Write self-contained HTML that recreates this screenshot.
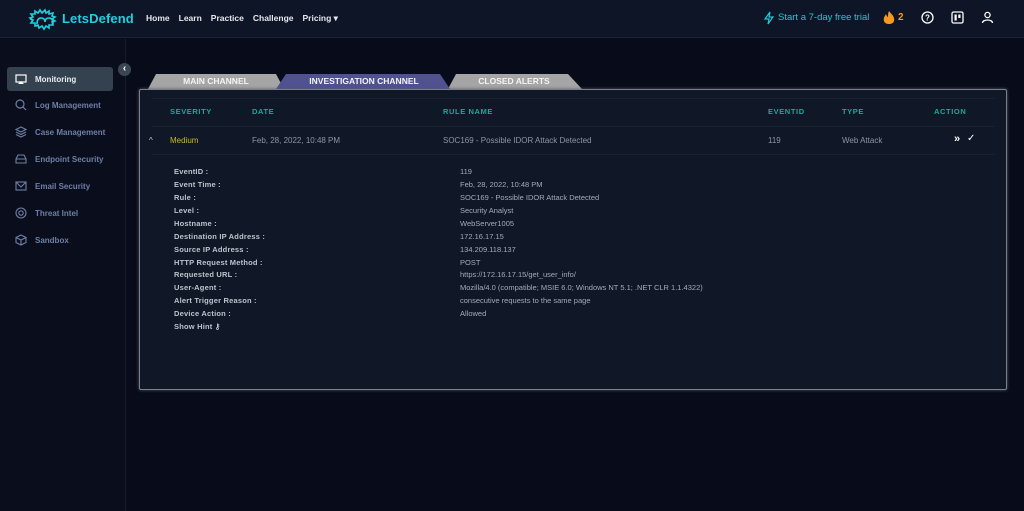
<!DOCTYPE html>
<html><head><meta charset="utf-8"><style>
*{box-sizing:border-box;margin:0;padding:0}
body{width:1024px;height:511px;overflow:hidden;background:#080b19;font-family:"Liberation Sans",sans-serif;position:relative}
.hdr{position:absolute;left:0;top:0;width:1024px;height:38px;background:#0e1526;border-bottom:1px solid #1c2334}
.logo{position:absolute;left:28px;top:6px}
.brand{position:absolute;left:62px;top:11px;color:#1fd0e0;font-size:13px;font-weight:bold;letter-spacing:0.1px}
.nav{position:absolute;top:13px;left:146px;color:#e6e8ee;font-size:8.5px;font-weight:bold}
.nav span{margin-right:9px}
.trial{position:absolute;left:764px;top:12px;color:#1fc8d6;font-size:9.5px}
.side{position:absolute;left:0;top:39px;width:126px;height:472px;background:#0a0e1c;border-right:1px solid #161c2b}
.item{position:absolute;left:7px;width:106px;height:24px;color:#6e7fa6;font-size:8px;font-weight:bold;display:flex;align-items:center;padding-left:8px}
.item svg{margin-right:8px}
.item.act{background:#34414f;color:#e8ecf2;border-radius:3px}
.col{position:absolute;left:118px;top:63px;width:13px;height:13px;border-radius:50%;background:#3a4654;color:#fff;font-size:10px;text-align:center;line-height:12px;font-weight:bold}
.tab{position:absolute;top:73px;height:16px;font-size:8.5px;font-weight:bold;color:#f4f4f6;text-align:center;line-height:17px}
.panel{position:absolute;left:139px;top:89px;width:868px;height:301px;background:#101827;border:1.5px solid #7b7f8c;border-radius:2px;box-shadow:0 0 3px #5a5e6a}
.th{position:absolute;top:107px;color:#1aa79a;font-size:7.5px;font-weight:bold;letter-spacing:0.6px}
.td{position:absolute;top:136px;color:#8e96a6;font-size:8px}
.lbl{position:absolute;left:174px;color:#bcc3ce;font-size:7.5px;font-weight:bold;letter-spacing:0.2px}
.val{position:absolute;left:460px;color:#a4abb7;font-size:7.5px}
.line{position:absolute;left:152px;width:842px;height:1px;background:#1a2232}
</style></head><body>
<div class="hdr">
<svg class="logo" width="34" height="26" viewBox="0 0 34 26"><path d="M5 14 l-3-2 3-1 -2-3 4 0 0-3 3 2 2-3 2 3 3-3 1 3 3-2 0 3 4-1-1 3 3 1-3 2 3 2-3 1 1 3-4 0 0 3-3-2-2 3-2-3-3 2-1-3-3 1 0-3-4 0 2-3-3-1z" fill="none" stroke="#1fd0e0" stroke-width="1.6"/><path d="M9 18 q0-6 4-6 q4 0 4 4 q0-4 4-4 q4 0 4 6" fill="none" stroke="#1fd0e0" stroke-width="1.6"/></svg>
<div class="brand">LetsDefend</div>
<div class="nav"><span>Home</span><span>Learn</span><span>Practice</span><span>Challenge</span><span>Pricing ▾</span></div>
<svg style="position:absolute;left:763px;top:11px" width="12" height="14" viewBox="0 0 12 14"><path d="M7 1 L2 8 H6 L5 13 L10 6 H6 Z" fill="none" stroke="#1fc8d6" stroke-width="1.2"/></svg>
<div class="trial" style="left:778px">Start a 7-day free trial</div>
<svg style="position:absolute;left:882px;top:10px" width="14" height="16" viewBox="0 0 14 16"><path d="M7 1 C9 4 13 6 12 11 C11 15 3 15 2 11 C1 8 3 6 4 4 C5 7 6 7 6 7 C6 5 6 3 7 1Z" fill="#f59a1e"/></svg>
<div style="position:absolute;left:898px;top:12px;color:#f59a1e;font-size:10px;font-weight:bold">2</div>
<svg style="position:absolute;left:921px;top:11px" width="13" height="13" viewBox="0 0 13 13"><circle cx="6.5" cy="6.5" r="5.5" fill="none" stroke="#fff" stroke-width="1.3"/><text x="6.5" y="9.5" font-size="8" fill="#fff" text-anchor="middle" font-family="Liberation Sans" font-weight="bold">?</text></svg>
<svg style="position:absolute;left:951px;top:11px" width="13" height="13" viewBox="0 0 13 13"><rect x="1" y="1" width="11" height="11" rx="1.5" fill="none" stroke="#fff" stroke-width="1.3"/><rect x="3.5" y="3.5" width="2.2" height="6" fill="#fff"/><rect x="7.3" y="3.5" width="2.2" height="3.5" fill="#fff"/></svg>
<svg style="position:absolute;left:981px;top:11px" width="13" height="13" viewBox="0 0 13 13"><circle cx="6.5" cy="4" r="2.6" fill="none" stroke="#fff" stroke-width="1.3"/><path d="M1.5 12 C1.5 8 11.5 8 11.5 12" fill="none" stroke="#fff" stroke-width="1.3"/></svg>
</div>
<div class="side"></div>
<div class="item act" style="top:67px"><svg width="12" height="11" viewBox="0 0 12 11"><rect x="1" y="1" width="10" height="7" fill="none" stroke="#fff" stroke-width="1.2"/><path d="M3 10 L6 7 L9 10Z" fill="#fff"/></svg>Monitoring</div>
<div class="item" style="top:93px"><svg width="12" height="12" viewBox="0 0 12 12"><circle cx="5" cy="5" r="4" fill="none" stroke="#6e7fa6" stroke-width="1.2"/><path d="M8 8 L11 11" stroke="#6e7fa6" stroke-width="1.2"/></svg>Log Management</div>
<div class="item" style="top:120px"><svg width="12" height="12" viewBox="0 0 12 12"><path d="M6 1 L11 3.5 L6 6 L1 3.5Z M1 6 L6 8.5 L11 6 M1 8.5 L6 11 L11 8.5" fill="none" stroke="#6e7fa6" stroke-width="1.1"/></svg>Case Management</div>
<div class="item" style="top:147px"><svg width="12" height="12" viewBox="0 0 12 12"><path d="M1 6 L3 2 H9 L11 6 V10 H1Z M1 6 H11" fill="none" stroke="#6e7fa6" stroke-width="1.1"/></svg>Endpoint Security</div>
<div class="item" style="top:174px"><svg width="12" height="12" viewBox="0 0 12 12"><rect x="1" y="2" width="10" height="8" fill="none" stroke="#6e7fa6" stroke-width="1.1"/><path d="M1 2 L6 7 L11 2" fill="none" stroke="#6e7fa6" stroke-width="1.1"/></svg>Email Security</div>
<div class="item" style="top:201px"><svg width="12" height="12" viewBox="0 0 12 12"><circle cx="6" cy="6" r="5" fill="none" stroke="#6e7fa6" stroke-width="1.1"/><circle cx="6" cy="6" r="2.2" fill="none" stroke="#6e7fa6" stroke-width="1.1"/></svg>Threat Intel</div>
<div class="item" style="top:228px"><svg width="12" height="12" viewBox="0 0 12 12"><path d="M6 1 L11 3.5 V8.5 L6 11 L1 8.5 V3.5Z M1 3.5 L6 6 L11 3.5 M6 6 V11" fill="none" stroke="#6e7fa6" stroke-width="1.1"/></svg>Sandbox</div>
<div class="col">‹</div>
<svg style="position:absolute;left:148px;top:73px" width="440" height="17" viewBox="0 0 440 17"><path d="M0 16 L8 1 H128 L136 16Z" fill="#a5a5a5"/><path d="M300 16 L308 1 H420 L434 16Z" fill="#a5a5a5"/><path d="M128 16 L138 1 H292 L302 16Z" fill="#4f5190"/></svg>
<div class="tab" style="left:156px;width:120px">MAIN CHANNEL</div>
<div class="tab" style="left:286px;width:156px">INVESTIGATION CHANNEL</div>
<div class="tab" style="left:452px;width:124px">CLOSED ALERTS</div>
<div class="panel"></div>
<div class="line" style="top:98px"></div>
<div class="line" style="top:126px"></div>
<div class="line" style="top:154px"></div>
<div class="th" style="left:170px">SEVERITY</div>
<div class="th" style="left:252px">DATE</div>
<div class="th" style="left:443px">RULE NAME</div>
<div class="th" style="left:768px">EVENTID</div>
<div class="th" style="left:842px">TYPE</div>
<div class="th" style="left:934px">ACTION</div>
<div class="td" style="left:149px;color:#ccc">^</div>
<div class="td" style="left:170px;color:#c8b82a">Medium</div>
<div class="td" style="left:252px">Feb, 28, 2022, 10:48 PM</div>
<div class="td" style="left:443px">SOC169 - Possible IDOR Attack Detected</div>
<div class="td" style="left:768px">119</div>
<div class="td" style="left:842px">Web Attack</div>
<div class="td" style="left:954px;top:133px;color:#fff;font-size:11px;font-weight:bold">»</div>
<div class="td" style="left:967px;top:133px;color:#fff;font-size:10px">✓</div>
<div class="lbl" style="top:167px">EventID :</div><div class="val" style="top:167px">119</div>
<div class="lbl" style="top:180px">Event Time :</div><div class="val" style="top:180px">Feb, 28, 2022, 10:48 PM</div>
<div class="lbl" style="top:193px">Rule :</div><div class="val" style="top:193px">SOC169 - Possible IDOR Attack Detected</div>
<div class="lbl" style="top:206px">Level :</div><div class="val" style="top:206px">Security Analyst</div>
<div class="lbl" style="top:219px">Hostname :</div><div class="val" style="top:219px">WebServer1005</div>
<div class="lbl" style="top:232px">Destination IP Address :</div><div class="val" style="top:232px">172.16.17.15</div>
<div class="lbl" style="top:245px">Source IP Address :</div><div class="val" style="top:245px">134.209.118.137</div>
<div class="lbl" style="top:258px">HTTP Request Method :</div><div class="val" style="top:258px">POST</div>
<div class="lbl" style="top:270px">Requested URL :</div><div class="val" style="top:270px">https://172.16.17.15/get_user_info/</div>
<div class="lbl" style="top:283px">User-Agent :</div><div class="val" style="top:283px">Mozilla/4.0 (compatible; MSIE 6.0; Windows NT 5.1; .NET CLR 1.1.4322)</div>
<div class="lbl" style="top:296px">Alert Trigger Reason :</div><div class="val" style="top:296px">consecutive requests to the same page</div>
<div class="lbl" style="top:309px">Device Action :</div><div class="val" style="top:309px">Allowed</div>
<div class="lbl" style="top:322px">Show Hint ⚷</div>
</body></html>
